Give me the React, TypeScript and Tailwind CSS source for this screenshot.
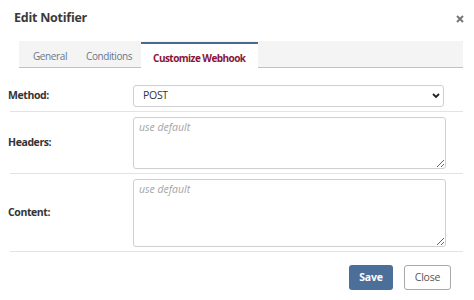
import React from "react";

export default function App() {
  const font = { fontFamily: '"Open Sans", "Noto Sans", sans-serif' };
  return (
    <div className="w-[474px] h-[300px] bg-white text-[#333] overflow-hidden" style={font}>
      {/* Header */}
      <div className="flex items-center justify-between h-[36px] pl-[14px] pr-[10px]">
        <div className="text-[12.5px] font-bold tracking-[-0.25px] text-[#3a3a3a]">Edit Notifier</div>
        <svg width="8" height="8" viewBox="0 0 8 8" className="mt-[1px]">
          <path d="M1 1 L7 7 M7 1 L1 7" stroke="#777" strokeWidth="2" />
        </svg>
      </div>
      {/* Tabs */}
      <div className="ml-[19px] mr-[11px] mt-[5px] h-[27px] bg-[#f4f4f4] border-b border-[#b9c3cd] flex text-[10px] tracking-[-0.4px]">
        <div className="pl-[14px] pr-[9px] pt-[5px] flex items-center text-[#6a7888]">General</div>
        <div className="pl-[10px] pr-[9px] pt-[5px] flex items-center text-[#6a7888]">Conditions</div>
        <div className="px-[12px] pt-[3px] mt-[1px] h-[27px] bg-white border-t-2 border-[#4a6b8c] flex items-center font-bold tracking-[-0.55px] text-[#8b1538]">
          Customize Webhook
        </div>
      </div>
      {/* Form */}
      <div className="mt-[12px] ml-[10px] mr-[11px]">
        <div className="flex items-center pt-[5px] pb-[4px] border-b border-[#e3e3e3]">
          <div className="w-[123px] -ml-[2px] text-[10.5px] font-bold tracking-[-0.4px]">Method:</div>
          <div className="relative w-[311px] h-[22px] ml-[2px]">
            <div className="w-full h-full border border-[#cfcfcf] rounded-[3px] flex items-center pl-[9px] text-[10.5px] tracking-[-0.3px] text-[#333]">POST</div>
            <svg width="8" height="6" viewBox="0 0 8 6" className="absolute right-[4px] top-[8px]">
              <path d="M1 1 L4 4 L7 1" stroke="#222" strokeWidth="1.8" fill="none" />
            </svg>
          </div>
        </div>
        <div className="flex items-center pt-[5px] pb-[4px] border-b border-[#e3e3e3]">
          <div className="w-[123px] -ml-[2px] text-[10.5px] font-bold tracking-[-0.4px]">Headers:</div>
          <textarea
            placeholder="use default"
            className="ml-[2px] w-[313px] h-[52px] border border-[#cfcfcf] rounded-[3px] px-[5px] py-[2px] text-[10.5px] italic placeholder:text-[#a5a5a5] outline-none"
            style={font}
          />
        </div>
        <div className="flex items-center pt-[5px] pb-[4px] border-b border-[#e3e3e3]">
          <div className="w-[123px] -ml-[2px] text-[10.5px] font-bold tracking-[-0.4px]">Content:</div>
          <textarea
            placeholder="use default"
            className="ml-[2px] w-[313px] h-[68px] border border-[#cfcfcf] rounded-[3px] px-[5px] py-[2px] text-[10.5px] italic placeholder:text-[#a5a5a5] outline-none"
            style={font}
          />
        </div>
      </div>
      {/* Footer */}
      <div className="flex justify-end gap-[11px] mt-[13px] mr-[23px]">
        <button className="w-[44px] h-[25px] rounded-[3px] bg-[#4b6f99] text-white text-[10.5px] font-bold tracking-[-0.2px]">Save</button>
        <button className="w-[47px] h-[25px] rounded-[3px] border border-[#a8a8a8] bg-white text-[#555] text-[10.5px] tracking-[-0.2px]">Close</button>
      </div>
    </div>
  );
}
